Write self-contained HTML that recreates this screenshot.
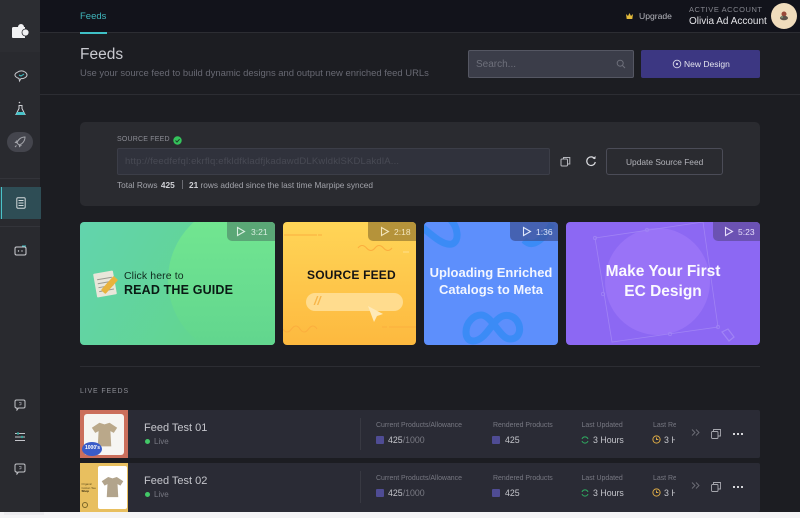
<!DOCTYPE html>
<html><head><meta charset="utf-8">
<style>
*{box-sizing:border-box;margin:0;padding:0}
html,body{width:800px;height:518px;overflow:hidden;background:#f4f4f6;font-family:"Liberation Sans",sans-serif}
.a{position:absolute;white-space:nowrap}
#app{position:absolute;left:0;top:0;width:800px;height:512px;background:#1c1d22;overflow:hidden}
.lab{font-size:6.950px;color:#777882}
.val{font-size:8.800px;color:#c4c5cb}
</style></head><body>
<div class="a" style="left:4px;top:512px;width:40px;height:3px;background:#ebebee"></div>
<div id="app">
<!-- top bar -->
<div class="a" style="left:40px;top:0;width:760px;height:32px;background:#12131b"></div>
<div class="a" style="left:40px;top:32px;width:760px;height:1px;background:#2c2d33"></div>
<div class="a" style="left:80px;top:11px;font-size:9.500px;color:#3fb7bd">Feeds</div>
<div class="a" style="left:80px;top:32px;width:27px;height:2px;background:#3fc0c6"></div>
<svg class="a" style="left:625px;top:12px" width="9" height="8" viewBox="0 0 9 8"><path d="M1 2l2 2 1.500-3 1.500 3 2-2-.7 5H1.700z" fill="#e2b93b"/></svg>
<div class="a" style="left:639px;top:11px;font-size:8.600px;color:#b5b6bd">Upgrade</div>
<div class="a" style="left:689px;top:5px;font-size:7.500px;letter-spacing:.55px;color:#85868e">ACTIVE ACCOUNT</div>
<div class="a" style="left:689px;top:15.500px;font-size:10px;color:#e4e4e8">Olivia Ad Account</div>
<div class="a" style="left:771px;top:3px;width:26px;height:26px;border-radius:50%;background:#f0dcbc"></div>
<svg class="a" style="left:778px;top:10px" width="12" height="12" viewBox="0 0 12 12"><circle cx="6" cy="4" r="2.500" fill="#9a4a3a"/><ellipse cx="6" cy="8" rx="4" ry="2.300" fill="#5c544c"/><circle cx="4" cy="7" r="1.200" fill="#7c8a70"/></svg>
<!-- header -->
<div class="a" style="left:80px;top:46px;font-size:15.500px;color:#c9cad0">Feeds</div>
<div class="a" style="left:80px;top:68px;font-size:9.450px;color:#686973">Use your source feed to build dynamic designs and output new enriched feed URLs</div>
<div class="a" style="left:40px;top:94px;width:760px;height:1px;background:#2c2d33"></div>
<div class="a" style="left:468px;top:50px;width:166px;height:28px;background:#3b3d49;border:1px solid #555763;border-radius:2px"></div>
<div class="a" style="left:476px;top:59px;font-size:10px;color:#6e707b">Search...</div>
<svg class="a" style="left:616px;top:59px" width="10" height="10" viewBox="0 0 10 10" fill="none" stroke="#6e707b" stroke-width="1"><circle cx="4.200" cy="4.200" r="3"/><path d="M6.500 6.500L9 9"/></svg>
<div class="a" style="left:641px;top:50px;width:119px;height:28px;background:#3c3782;border-radius:2px"></div>
<svg class="a" style="left:672px;top:59px" width="10" height="10" viewBox="0 0 10 10" fill="none" stroke="#d5d5e6" stroke-width=".9"><circle cx="5" cy="5" r="3.800"/><circle cx="5" cy="5" r="1.100" fill="#d5d5e6" stroke="none"/></svg>
<div class="a" style="left:684px;top:59px;font-size:8.500px;color:#e4e4ee">New Design</div>
<!-- source feed panel -->
<div class="a" style="left:80px;top:122px;width:680px;height:84px;background:#2a2b30;border-radius:5px"></div>
<div class="a" style="left:117px;top:136px;font-size:7px;letter-spacing:.2px;color:#8c8d95">SOURCE FEED</div>
<svg class="a" style="left:173px;top:135.500px" width="9" height="9" viewBox="0 0 9 9"><circle cx="4.500" cy="4.500" r="4.200" fill="#34c35b"/><path d="M2.500 4.500l1.500 1.500 2.600-2.800" fill="none" stroke="#1d3d28" stroke-width="1"/></svg>
<div class="a" style="left:117px;top:148px;width:433px;height:27px;background:#30323c;border:1px solid #3c3e48;border-radius:2px"></div>
<div class="a" style="left:125px;top:156px;font-size:9.500px;letter-spacing:.19px;color:#484a54">http://feedfefql:ekrflq:efkldfkladfjkadawdDLKwldklSKDLakdlA...</div>
<div class="a" style="left:117px;top:180px;font-size:8.300px;color:#a2a3aa">Total Rows <b style="color:#d0d1d6;margin-left:1px">425</b></div>
<div class="a" style="left:182px;top:180px;width:1px;height:9px;background:#6a6b72"></div>
<div class="a" style="left:189px;top:180px;font-size:8.300px;color:#a2a3aa"><b style="color:#d0d1d6">21</b> rows added since the last time Marpipe synced</div>
<svg class="a" style="left:560px;top:156px" width="11" height="11" viewBox="0 0 11 11" fill="none" stroke="#b6b7bd" stroke-width="1"><rect x="1" y="3" width="6.500" height="7" rx="1"/><path d="M3.500 3V1.500h6.300V8H7.500"/></svg>
<svg class="a" style="left:585px;top:155px" width="12" height="12" viewBox="0 0 12 12" fill="none" stroke="#d9dade" stroke-width="1.200"><path d="M9.800 4A4.300 4.300 0 1 0 10.300 7"/><path d="M7.500 3.800h3V1z" fill="#d9dade" stroke="none"/></svg>
<div class="a" style="left:606px;top:148px;width:117px;height:27px;border:1px solid #4b4c57;border-radius:3px"></div>
<div class="a" style="left:626px;top:157px;font-size:8.400px;color:#b2b3b9">Update Source Feed</div>
<!-- cards -->
<div class="a" style="left:80px;top:222px;width:195px;height:123px;border-radius:4px;overflow:hidden;background:linear-gradient(120deg,#62d4ad,#62d590 70%)">
 <div class="a" style="left:88px;top:-20px;width:156px;height:156px;border-radius:50%;background:linear-gradient(#74e891,#60d48e)"></div>
 <div class="a" style="right:0;top:0;width:48px;height:19px;background:#5aa776;border-bottom-left-radius:5px"></div>
 <svg class="a" style="left:156px;top:4px" width="10" height="11" viewBox="0 0 10 11" fill="none" stroke="#d9eee0" stroke-width="1.100"><path d="M1.500 1.500v8l7-4z"/></svg>
 <div class="a" style="left:171px;top:4.500px;font-size:8.500px;color:#d9eee0">3:21</div>
 <div class="a" style="left:15px;top:50px;width:20px;height:24px;background:#e9e6da;transform:rotate(-10deg);border-radius:1px"></div>
 <div class="a" style="left:17px;top:56px;width:15px;height:1px;background:#9a9a90;transform:rotate(-10deg);box-shadow:0 4px #9a9a90,0 8px #9a9a90,0 12px #9a9a90"></div>
 <div class="a" style="left:20px;top:60px;width:19px;height:6px;background:#e8b33d;transform:rotate(-48deg);border-radius:1px"></div>
 <div class="a" style="left:44px;top:48px;font-size:10.500px;letter-spacing:.1px;color:#0f2a1d">Click here to</div>
 <div class="a" style="left:44px;top:61px;font-size:12.500px;font-weight:bold;letter-spacing:.15px;color:#0a1a14">READ THE GUIDE</div>
</div>
<div class="a" style="left:283px;top:222px;width:133px;height:123px;border-radius:4px;overflow:hidden;background:linear-gradient(#ffd557,#fdb93f)">
 <div class="a" style="right:0;top:0;width:48px;height:19px;background:#b5933a;border-bottom-left-radius:5px"></div>
 <svg class="a" style="left:97px;top:4px" width="10" height="11" viewBox="0 0 10 11" fill="none" stroke="#f3e6bd" stroke-width="1.100"><path d="M1.500 1.500v8l7-4z"/></svg>
 <div class="a" style="left:111px;top:4.500px;font-size:8.500px;color:#f3e6bd">2:18</div>
 <svg class="a" style="left:0;top:0" width="133" height="123" fill="none" stroke="#fbae3e" stroke-width="1.100"><path d="M1 13h33M35 13h4"/><path d="M75 26q4-5 8.500 0t8.500 0 8.500 0 8.500 0"/><path d="M120 30h6" stroke="#ffe08a"/><path d="M0 107q4 6 8.500 0t8.500 0 8.500 0 8.500 0"/><path d="M99 105h5M106 105h27"/></svg>
 <div class="a" style="left:24px;top:46px;font-size:12px;font-weight:bold;letter-spacing:.2px;color:#141414">SOURCE FEED</div>
 <div class="a" style="left:23px;top:71px;width:97px;height:18px;border-radius:9px;background:#ffdc8e"></div>
 <div class="a" style="left:31px;top:72px;font-size:12px;font-style:italic;font-weight:bold;color:#f8b648">//</div>
 <svg class="a" style="left:84px;top:83px" width="17" height="18" viewBox="0 0 17 18"><path d="M1 1l15 8-6 2-3 6z" fill="#ffeab8"/></svg>
</div>
<div class="a" style="left:424px;top:222px;width:134px;height:123px;border-radius:4px;overflow:hidden;background:#5d8ffc">
 <svg class="a" style="left:0;top:0" width="134" height="123" fill="none" stroke="#3b8bf6" stroke-width="7"><path d="M-2 5C10 15 20 24 28 22 36 19 34 5 26-3"/><path d="M100 18C108 26 118 20 128 2"/><path d="M42 110C42 100 50 93 57 93 68 93 76 117 86 117 94 117 97 110 95 103 92 94 82 90 74 97 66 104 60 119 49 119 45 119 42 116 42 110z"/></svg>
 <div class="a" style="right:0;top:0;width:48px;height:19px;background:rgba(60,80,150,.72);border-bottom-left-radius:5px"></div>
 <svg class="a" style="left:98px;top:4px" width="10" height="11" viewBox="0 0 10 11" fill="none" stroke="#dfe7fa" stroke-width="1.100"><path d="M1.500 1.500v8l7-4z"/></svg>
 <div class="a" style="left:112px;top:4.500px;font-size:8.500px;color:#dfe7fa">1:36</div>
 <div class="a" style="left:0;top:43px;width:134px;text-align:center;font-size:13px;line-height:16.500px;font-weight:bold;color:#f3f6ff">Uploading Enriched<br>Catalogs to Meta</div>
</div>
<div class="a" style="left:566px;top:222px;width:194px;height:123px;border-radius:4px;overflow:hidden;background:#8c68f3">
 <div class="a" style="left:39px;top:6px;width:105px;height:107px;border-radius:50%;background:#9973f7"></div>
 <svg class="a" style="left:0;top:0" width="194" height="123" fill="none" stroke="#a083f5" stroke-width=".8"><path d="M29 16L137 0 152 105 46 120z"/><circle cx="29" cy="16" r="1.700"/><circle cx="81" cy="8" r="1.700"/><circle cx="152" cy="105" r="1.700"/><circle cx="104" cy="112" r="1.700"/><circle cx="37" cy="72" r="1.700"/><path d="M156 110l6-3 6 8-5 4z" stroke-width="1.200"/></svg>
 <div class="a" style="right:0;top:0;width:47px;height:19px;background:#6b52b3;border-bottom-left-radius:5px"></div>
 <svg class="a" style="left:158px;top:4px" width="10" height="11" viewBox="0 0 10 11" fill="none" stroke="#e6defa" stroke-width="1.100"><path d="M1.500 1.500v8l7-4z"/></svg>
 <div class="a" style="left:172px;top:4.500px;font-size:8.500px;color:#e6defa">5:23</div>
 <div class="a" style="left:0;top:40px;width:194px;text-align:center;font-size:15.500px;line-height:20px;font-weight:bold;color:#fbf9ff">Make Your First<br>EC Design</div>
</div>
<div class="a" style="left:80px;top:366px;width:680px;height:1px;background:#2c2d33"></div>
<div class="a" style="left:80px;top:388px;font-size:7px;letter-spacing:.85px;color:#8c8d95">LIVE FEEDS</div>
<!-- row 1 -->
<div class="a" style="left:80px;top:410px;width:680px;height:48px;background:#2a2b35;border-radius:2px"></div>
<div class="a" style="left:80px;top:410px;width:48px;height:48px;background:#cb6f5c"></div>
<div class="a" style="left:84px;top:414px;width:40px;height:41px;background:#f6f5f2;border-radius:3px"></div>
<svg class="a" style="left:91px;top:421px" width="27" height="27" viewBox="0 0 32 30"><path d="M10 1l6 2 6-2 9 6-4 6-4-2 1 18H8l1-18-4 2-4-6z" fill="#baa88a"/></svg>
<div class="a" style="left:82px;top:442px;width:20px;height:14px;border-radius:50%;background:#3a5cc8"></div>
<div class="a" style="left:85px;top:445px;font-size:5px;font-weight:bold;color:#fff">1000's</div>
<div class="a" style="left:144px;top:421.500px;font-size:11px;color:#c5c6cc">Feed Test 01</div>
<div class="a" style="left:145px;top:439px;width:5px;height:5px;border-radius:50%;background:#43c868"></div>
<div class="a" style="left:154px;top:437px;font-size:8px;color:#777882">Live</div>
<div class="a" style="left:360px;top:418px;width:1px;height:32px;background:#383942"></div>
<div class="a lab" style="left:376px;top:422px">Current Products/Allowance</div>
<div class="a" style="left:376px;top:436px;width:8px;height:8px;background:#4f4c94;border-radius:1px"></div>
<div class="a val" style="left:388px;top:435px">425<span style="color:#7a7b84">/1000</span></div>
<div class="a lab" style="left:493px;top:422px">Rendered Products</div>
<div class="a" style="left:492px;top:436px;width:8px;height:8px;background:#4f4c94;border-radius:1px"></div>
<div class="a val" style="left:505px;top:435px">425</div>
<div class="a lab" style="left:581.500px;top:422px">Last Updated</div>
<svg class="a" style="left:581px;top:436px" width="8" height="8" viewBox="0 0 8 8" fill="none" stroke="#2fae62" stroke-width="1"><path d="M1 3a3.200 3.200 0 0 1 6 0M7 5a3.200 3.200 0 0 1-6 0"/></svg>
<div class="a val" style="left:593px;top:435px">3 Hours</div>
<div class="a lab" style="left:653px;top:422px;width:23px;overflow:hidden">Last Rendered</div>
<svg class="a" style="left:652px;top:435px" width="9" height="9" viewBox="0 0 9 9" fill="none" stroke="#d9a845" stroke-width="1"><circle cx="4.500" cy="4.500" r="3.600"/><path d="M4.500 2.500v2h1.800"/></svg>
<div class="a val" style="left:664px;top:435px;width:11px;overflow:hidden">3 Hours</div>
<svg class="a" style="left:691px;top:429px" width="9" height="7" viewBox="0 0 9 7" fill="none" stroke="#6e6f78" stroke-width=".9"><path d="M1 .5l3 3-3 3M5 .5l3 3-3 3"/></svg>
<svg class="a" style="left:711px;top:429px" width="10" height="10" viewBox="0 0 10 10" fill="none" stroke="#a6a7ae" stroke-width=".9"><rect x=".5" y="2.500" width="6.500" height="7" rx="1"/><path d="M2.500 2.500V.5h7v6.500H7"/></svg>
<div class="a" style="left:733px;top:433px;width:2px;height:2px;background:#d5d6da;box-shadow:4px 0 #d5d6da,8px 0 #d5d6da"></div>
<!-- row 2 -->
<div class="a" style="left:80px;top:463px;width:680px;height:49px;background:#2a2b35;border-radius:2px"></div>
<div class="a" style="left:80px;top:463px;width:48px;height:49px;background:#e8bf5f"></div>
<div class="a" style="left:98px;top:466px;width:29px;height:43px;background:#fff;border-radius:2px"></div>
<svg class="a" style="left:101px;top:475px" width="23" height="24" viewBox="0 0 32 30"><path d="M10 1l6 2 6-2 9 6-4 6-4-2 1 18H8l1-18-4 2-4-6z" fill="#b2a48c"/></svg>
<div class="a" style="left:81.500px;top:483px;font-size:3px;line-height:3.500px;color:#5a4a1c;white-space:normal;width:15px">Organic Cotton Tee<br><b style="color:#2a220c">Shop</b></div>
<div class="a" style="left:82px;top:502px;width:6px;height:6px;border:.7px solid #7a6628;border-radius:50%"></div>
<div class="a" style="left:144px;top:474.500px;font-size:11px;color:#c5c6cc">Feed Test 02</div>
<div class="a" style="left:145px;top:492px;width:5px;height:5px;border-radius:50%;background:#43c868"></div>
<div class="a" style="left:154px;top:490px;font-size:8px;color:#777882">Live</div>
<div class="a" style="left:360px;top:471px;width:1px;height:32px;background:#383942"></div>
<div class="a lab" style="left:376px;top:475px">Current Products/Allowance</div>
<div class="a" style="left:376px;top:489px;width:8px;height:8px;background:#4f4c94;border-radius:1px"></div>
<div class="a val" style="left:388px;top:488px">425<span style="color:#7a7b84">/1000</span></div>
<div class="a lab" style="left:493px;top:475px">Rendered Products</div>
<div class="a" style="left:492px;top:489px;width:8px;height:8px;background:#4f4c94;border-radius:1px"></div>
<div class="a val" style="left:505px;top:488px">425</div>
<div class="a lab" style="left:581.500px;top:475px">Last Updated</div>
<svg class="a" style="left:581px;top:489px" width="8" height="8" viewBox="0 0 8 8" fill="none" stroke="#2fae62" stroke-width="1"><path d="M1 3a3.200 3.200 0 0 1 6 0M7 5a3.200 3.200 0 0 1-6 0"/></svg>
<div class="a val" style="left:593px;top:488px">3 Hours</div>
<div class="a lab" style="left:653px;top:475px;width:23px;overflow:hidden">Last Rendered</div>
<svg class="a" style="left:652px;top:488px" width="9" height="9" viewBox="0 0 9 9" fill="none" stroke="#d9a845" stroke-width="1"><circle cx="4.500" cy="4.500" r="3.600"/><path d="M4.500 2.500v2h1.800"/></svg>
<div class="a val" style="left:664px;top:488px;width:11px;overflow:hidden">3 Hours</div>
<svg class="a" style="left:691px;top:482px" width="9" height="7" viewBox="0 0 9 7" fill="none" stroke="#6e6f78" stroke-width=".9"><path d="M1 .5l3 3-3 3M5 .5l3 3-3 3"/></svg>
<svg class="a" style="left:711px;top:482px" width="10" height="10" viewBox="0 0 10 10" fill="none" stroke="#a6a7ae" stroke-width=".9"><rect x=".5" y="2.500" width="6.500" height="7" rx="1"/><path d="M2.500 2.500V.5h7v6.500H7"/></svg>
<div class="a" style="left:733px;top:486px;width:2px;height:2px;background:#d5d6da;box-shadow:4px 0 #d5d6da,8px 0 #d5d6da"></div>
<!-- sidebar -->
<div class="a" style="left:0;top:0;width:40px;height:512px;background:#292a2f"></div>
<div class="a" style="left:0;top:0;width:40px;height:52px;background:#2c2d32"></div>
<svg class="a" style="left:10px;top:22px" width="20" height="18" viewBox="0 0 20 18"><path d="M2 6.500Q2 5 3.500 5H8a3 3 0 0 1 6 0h1v11H3.500Q2 16 2 15z" fill="#f1f1f3"/><circle cx="15.500" cy="10.500" r="3.500" fill="#f1f1f3" stroke="#2c2d32" stroke-width=".8"/></svg>
<svg class="a" style="left:14px;top:70px" width="14" height="13" viewBox="0 0 14 13" fill="none" stroke="#c8c9ce" stroke-width="1"><path d="M3 2.500Q7-.5 11 2q3 2 1.500 4.500Q10 9 7 8.500L5.500 11 5 8.500Q.5 7 1 4.500 1.500 3 3 2.500z"/><path d="M5 5l2 1 3-2" stroke="#3fc0c6"/></svg>
<svg class="a" style="left:14px;top:101px" width="13" height="15" viewBox="0 0 13 15" fill="none" stroke="#d0d1d6" stroke-width="1"><path d="M5 4.500h3v3l3 6H2l3-6z"/><path d="M3 11h7l1 3H2z" fill="#47c3c9" stroke="none"/><circle cx="5.500" cy="1.500" r=".8" fill="#d0d1d6" stroke="none"/></svg>
<div class="a" style="left:7px;top:132px;width:26px;height:20px;border-radius:10px;background:#44454d"></div>
<svg class="a" style="left:14px;top:136px" width="12" height="12" viewBox="0 0 12 12" fill="none" stroke="#a5a6ac" stroke-width="1"><path d="M11 1C7 1 4 3.500 3 7l2 2c3.500-1 6-4 6-8zM3.500 6.500H1.500l1.500-2M5.500 8.500v2l2-1.500M1 11l1.500-1.500"/></svg>
<div class="a" style="left:0;top:178px;width:40px;height:1px;background:#33343a"></div>
<div class="a" style="left:0;top:187px;width:41px;height:32px;background:#2e4d55"></div>
<div class="a" style="left:1px;top:187px;width:1px;height:32px;background:#4ac3c9"></div>
<svg class="a" style="left:16px;top:197px" width="10" height="12" viewBox="0 0 10 12" fill="none" stroke="#d2d9db" stroke-width="1"><rect x=".8" y=".8" width="8.400" height="10.400" rx="1.200"/><path d="M2.500 3.500h5M2.500 6h5M2.500 8.500h5"/></svg>
<div class="a" style="left:0;top:226px;width:40px;height:1px;background:#33343a"></div>
<svg class="a" style="left:14px;top:245px" width="13" height="11" viewBox="0 0 13 11" fill="none" stroke="#cfd0d5" stroke-width="1"><rect x="1" y="2" width="11" height="8" rx="1.500"/><path d="M8 1h4" stroke="#3fc0c6"/><circle cx="4.500" cy="6" r=".7" fill="#cfd0d5" stroke="none"/><circle cx="8" cy="6" r=".7" fill="#cfd0d5" stroke="none"/></svg>
<svg class="a" style="left:14px;top:399px" width="12" height="12" viewBox="0 0 12 12" fill="none" stroke="#c4c5ca" stroke-width="1"><path d="M2.500 1h7A1.500 1.500 0 0 1 11 2.500v5A1.500 1.500 0 0 1 9.500 9H4.500L3 11V9h-.5A1.500 1.500 0 0 1 1 7.500v-5A1.500 1.500 0 0 1 2.500 1z"/><path d="M5 3.500h2v2H6v1" stroke="#7d7e85"/></svg>
<svg class="a" style="left:14px;top:431px" width="12" height="12" viewBox="0 0 12 12" fill="none" stroke="#c4c5ca" stroke-width="1"><path d="M1 2.500h10M1 6h10M1 9.500h10"/><circle cx="4" cy="2.500" r="1.200" fill="#3aa9a0" stroke="none"/><circle cx="8" cy="6" r="1.200" fill="#3aa9a0" stroke="none"/></svg>
<svg class="a" style="left:14px;top:463px" width="12" height="12" viewBox="0 0 12 12" fill="none" stroke="#c4c5ca" stroke-width="1"><path d="M2.500 1h7A1.500 1.500 0 0 1 11 2.500v5A1.500 1.500 0 0 1 9.500 9H4.500L3 11V9h-.5A1.500 1.500 0 0 1 1 7.500v-5A1.500 1.500 0 0 1 2.500 1z"/><path d="M5 3.500h2v2H6v1" stroke="#7d7e85"/></svg>
</div>
</body></html>
